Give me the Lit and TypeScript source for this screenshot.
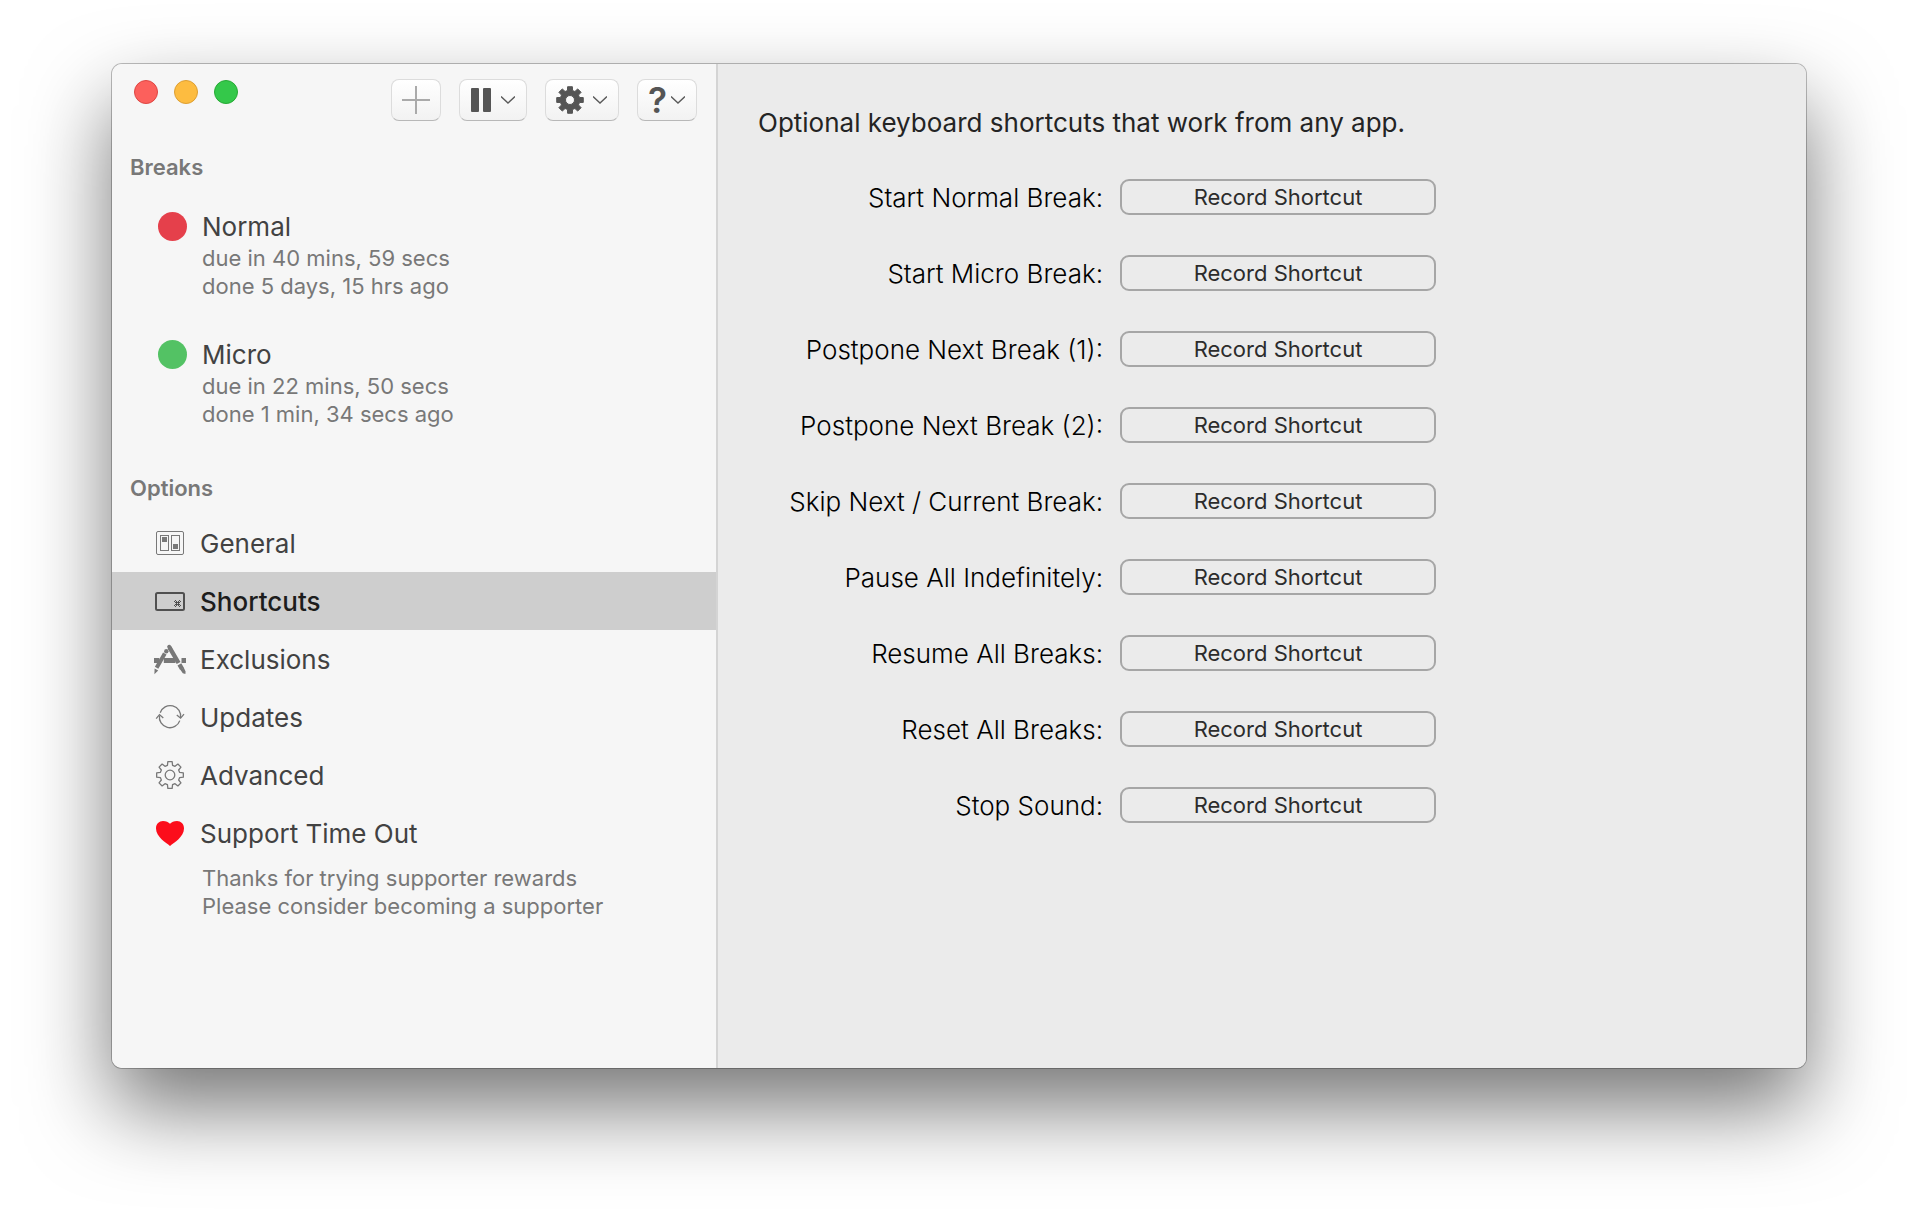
import { LitElement, html, svg, css } from "lit";
import { customElement, state, property } from "lit/decorators.js";
import { classMap } from "lit/directives/class-map.js";

const gearPath = (teeth: number, c: number, inner: number, outer: number, root: number, tip: number) => {
  const pts: string[] = [];
  for (let i = 0; i < teeth; i++) {
    const a = (i * 2 * Math.PI) / teeth - Math.PI / 2;
    for (const [off, r] of [[-root, inner], [-tip, outer], [tip, outer], [root, inner]]) {
      pts.push(`${(c + r * Math.cos(a + off)).toFixed(2)} ${(c + r * Math.sin(a + off)).toFixed(2)}`);
    }
  }
  return `M${pts.join("L")}Z`;
};

const icons: Record<string, unknown> = {
  general: svg`<g fill="none" stroke="#787878">
      <rect x="2.5" y="4.5" width="27" height="23" rx="1.5"/>
      <rect x="6.5" y="8.5" width="8" height="15"/><rect x="17.5" y="8.5" width="8" height="15"/></g>
      <path fill="#787878" d="M8 10h5v5H8zM19 17h5v5h-5z"/>`,
  shortcuts: svg`<rect x="2" y="8" width="28" height="17" rx="1.5" fill="none" stroke="#505050" stroke-width="2"/>
      <path stroke="#505050" d="M21 15.500h1M25 15.500h1M20 16.500h1M22 16.500h1M24 16.500h1M26 16.500h1M21 17.500h5M22 18.500h1M24 18.500h1M21 19.500h5M20 20.500h1M22 20.500h1M24 20.500h1M26 20.500h1M21 21.500h1M25 21.500h1"/>`,
  exclusions: svg`<g stroke="#787878" fill="none">
      <path stroke-width="5" d="M0 17.500h5.300M9.800 17.500h11.700M27.500 17.500h4.500"/>
      <path stroke-width="4" stroke-linecap="round" d="M15.200 3.800l1 1.700"/>
      <path stroke-width="4.400" d="M15.600 4.600L24.600 20M25.400 21.400L28 25.800"/>
      <path stroke-width="4" d="M10.800 10.600L2.600 24.800"/></g>
      <circle cx="12.300" cy="8.200" r="2.200" fill="#787878"/>
      <path fill="#787878" d="M.6 25.400l3.600 2.100L.4 31.200zM26.200 26.600l3.500-2.100 1.900 3.900-.2 2.700-2.600-.9z"/>`,
  updates: svg`<g fill="none" stroke="#787878" stroke-width="1.300">
      <path d="M6.200 11.800A10.500 10.500 0 0 1 26.500 17M25.800 19.600A10.500 10.500 0 0 1 5.500 14.500"/>
      <path d="M22.800 14l3.800 3.200 3.400-4M2.200 17.600l3.300-4 3.800 3.400"/></g>`,
  advanced: svg`<path d="${gearPath(8, 16, 10, 13.500, 0.26, 0.16)}" fill="none" stroke="#787878" stroke-width="1.300" stroke-linejoin="round"/>
      <circle cx="16" cy="16" r="4.800" fill="none" stroke="#787878" stroke-width="1.300"/>`,
  support: svg`<path fill="#fc0d1b" d="M16 29C12 25.500 2 20 2 11.500C2 6.800 5.200 4 9 4c3 0 5.600 1.100 7 2.800C17.400 5.100 20 4 23 4c3.800 0 7 2.800 7 7.500C30 20 20 25.500 16 29Z"/>`,
};

const chevron = html`<svg class="chevron" viewBox="0 0 14 8" aria-hidden="true"><path d="M0 .5L7 7L14 .5" fill="none" stroke="#5a5a5a" stroke-width="1.400"/></svg>`;

@customElement("window-toolbar")
export class WindowToolbar extends LitElement {
  static styles = css`
    :host { display: flex; justify-content: space-between; align-items: flex-start; padding: 15px 19px 0 22px; }
    .lights { display: flex; gap: 16px; padding-top: 1px; }
    .light { width: 24px; height: 24px; padding: 0; border-radius: 50%; border: 1px solid; }
    .close { background: #fc605c; border-color: #de4643; }
    .minimise { background: #fdbc40; border-color: #dd9f33; }
    .zoom { background: #34c84a; border-color: #27aa35; }
    .tools { display: flex; gap: 18px; }
    .tool {
      display: flex; align-items: center; justify-content: center; gap: 9px;
      height: 42px; padding: 0 11px 0 10px; box-sizing: border-box;
      border: 1px solid #dcdcdc; border-bottom-color: #b8b8b8; border-radius: 8px;
      background: linear-gradient(#ffffff, #f2f2f2);
      font: 600 35px/40px Inter, "Liberation Sans", sans-serif; color: #555;
    }
    .help { gap: 4px; width: 60px; justify-content: flex-end; }
    .add { padding: 0 10px; }
    .glyph { display: block; width: 28px; height: 28px; }
    .pause { width: 22px; }
    .chevron { display: block; width: 14px; height: 8px; }
  `;
  render() {
    return html`
      <div class="lights">
        <button class="light close" aria-label="Close"></button>
        <button class="light minimise" aria-label="Minimise"></button>
        <button class="light zoom" aria-label="Zoom"></button>
      </div>
      <div class="tools">
        <button class="tool add" aria-label="Add">
          <svg class="glyph" viewBox="0 0 28 28"><path d="M0 14h28M14 0v28" stroke="#aaa" stroke-width="2"/></svg>
        </button>
        <button class="tool" aria-label="Pause">
          <svg class="glyph pause" viewBox="0 0 22 28"><g fill="#555"><rect x="1" y="2" width="8" height="24" rx="1"/><rect x="13" y="2" width="8" height="24" rx="1"/></g></svg>
          ${chevron}
        </button>
        <button class="tool" aria-label="Settings">
          <svg class="glyph" viewBox="0 0 28 28"><path fill="#555" fill-rule="evenodd" stroke="#555" stroke-width="1" stroke-linejoin="round" d="${gearPath(8, 14, 9.8, 13.500, 0.26, 0.18)}M14 9.500a4.500 4.500 0 1 0 0 9a4.500 4.500 0 1 0 0-9Z"/></svg>
          ${chevron}
        </button>
        <button class="tool help" aria-label="Help"><span>?</span>${chevron}</button>
      </div>
    `;
  }
}

@customElement("app-sidebar")
export class AppSidebar extends LitElement {
  @property() selected = "shortcuts";
  static styles = css`
    :host { display: block; box-sizing: border-box; background: #f6f6f6; border-right: 2px solid #d4d4d4; color: #424242; font-size: 26px; line-height: 32px; }
    h2 { margin: 0; padding-left: 18px; font-size: 22px; line-height: 28px; font-weight: 600; color: #787878; }
    ul { list-style: none; margin: 0; padding: 0; }
    .breaks-title { padding-top: 32px; }
    .breaks { display: grid; gap: 39px; padding: 30px 0 46px 46px; }
    .break { display: grid; grid-template-columns: 29px 1fr; column-gap: 15px; }
    .dot { width: 29px; height: 29px; border-radius: 50%; margin-top: 1px; }
    .red { background: #e5404b; }
    .green { background: #53c264; }
    .detail { margin: 0; font-size: 22px; line-height: 28px; color: #787878; }
    .break .detail { margin-top: 1px; }
    .options { padding-top: 12px; }
    .option { display: flex; align-items: center; gap: 14px; height: 58px; padding-left: 42px; color: inherit; text-decoration: none; }
    .name { padding-top: 2px; }
    .selected { background: #cecece; color: #1d1d1d; font-weight: 500; }
    .icon { width: 32px; height: 32px; display: block; }
    .support-note { padding: 2px 0 0 90px; }
  `;
  private breaks = [
    { name: "Normal", tone: "red", due: "due in 40 mins, 59 secs", done: "done 5 days, 15 hrs ago" },
    { name: "Micro", tone: "green", due: "due in 22 mins, 50 secs", done: "done 1 min, 34 secs ago" },
  ];
  private options = [
    ["general", "General"],
    ["shortcuts", "Shortcuts"],
    ["exclusions", "Exclusions"],
    ["updates", "Updates"],
    ["advanced", "Advanced"],
    ["support", "Support Time Out"],
  ];
  private pick(e: Event, id: string) {
    e.preventDefault();
    this.dispatchEvent(new CustomEvent("pick", { detail: id }));
  }
  render() {
    return html`
      <window-toolbar></window-toolbar>
      <h2 class="breaks-title">Breaks</h2>
      <ul class="breaks">
        ${this.breaks.map((b) => html`
          <li class="break">
            <span class="dot ${b.tone}"></span>
            <div>
              ${b.name}
              <p class="detail">${b.due}<br />${b.done}</p>
            </div>
          </li>`)}
      </ul>
      <h2>Options</h2>
      <nav class="options">
        ${this.options.map(([id, name]) => html`
          <a class=${classMap({ option: true, selected: id === this.selected })} href="#${id}" @click=${(e: Event) => this.pick(e, id)}>
            <svg class="icon" viewBox="0 0 32 32" aria-hidden="true">${icons[id]}</svg><span class="name">${name}</span>
          </a>`)}
      </nav>
      <p class="detail support-note">Thanks for trying supporter rewards<br />Please consider becoming a supporter</p>
    `;
  }
}

@customElement("shortcut-list")
export class ShortcutList extends LitElement {
  static styles = css`
    :host { display: block; padding: 43px 40px; background: #ebebeb; }
    h1 { margin: 0; font-size: 26px; line-height: 32px; font-weight: 400; color: #242424; }
    .rows { display: grid; gap: 40px; padding-top: 40px; }
    .row { display: grid; grid-template-columns: 345px 316px; column-gap: 17px; align-items: center; }
    label { padding-top: 2px; text-align: right; font-size: 26px; line-height: 34px; font-weight: 300; color: #000; white-space: nowrap; }
    .record {
      height: 36px; padding: 0; box-sizing: border-box; border: 2px solid #a6a6a6; border-radius: 9px;
      background: transparent; color: #2c2c2c; font: 400 22px/28px Inter, "Liberation Sans", sans-serif;
    }
  `;
  private names = [
    "Start Normal Break:", "Start Micro Break:", "Postpone Next Break (1):", "Postpone Next Break (2):",
    "Skip Next / Current Break:", "Pause All Indefinitely:", "Resume All Breaks:", "Reset All Breaks:", "Stop Sound:",
  ];
  render() {
    return html`
      <h1>Optional keyboard shortcuts that work from any app.</h1>
      <div class="rows">
        ${this.names.map((n, i) => html`
          <div class="row">
            <label for="record-${i}">${n}</label>
            <button class="record" id="record-${i}">Record Shortcut</button>
          </div>`)}
      </div>
    `;
  }
}

@customElement("app-root")
export class AppRoot extends LitElement {
  @state() private selected = "shortcuts";
  static styles = css`
    :host {
      display: flex; box-sizing: border-box; min-height: 100vh; padding: 64px 112px 160px;
      background: #fff; font-family: Inter, "Liberation Sans", sans-serif;
    }
    .window {
      flex: 1; display: flex; border-radius: 10px;
      box-shadow: 0 0 0 1px rgba(0, 0, 0, 0.25), 0 40px 84px rgba(0, 0, 0, 0.54);
    }
    app-sidebar { flex: 0 0 606px; border-radius: 10px 0 0 10px; }
    shortcut-list { flex: 1; border-radius: 0 10px 10px 0; }
  `;
  render() {
    return html`
      <main class="window">
        <app-sidebar .selected=${this.selected} @pick=${(e: CustomEvent) => (this.selected = e.detail)}></app-sidebar>
        <shortcut-list></shortcut-list>
      </main>
    `;
  }
}
